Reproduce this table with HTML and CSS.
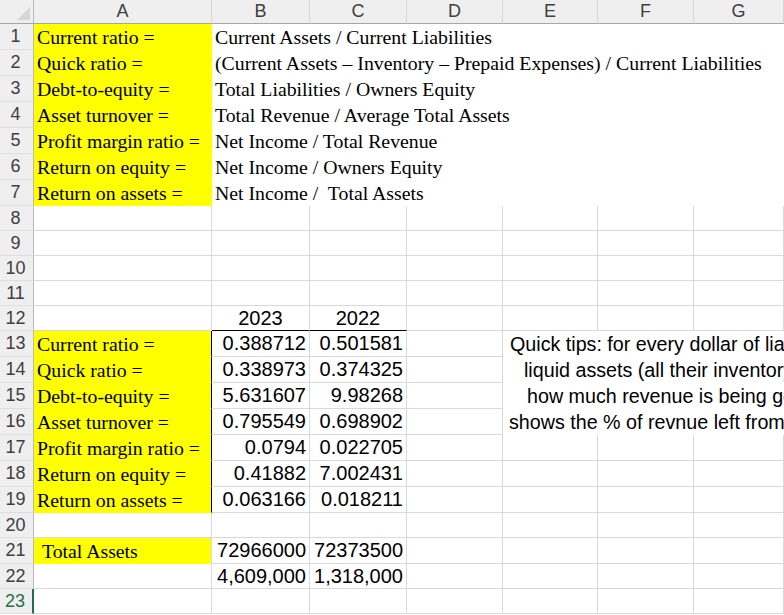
FILE: index.html
```html
<!DOCTYPE html>
<html>
<head>
<meta charset="utf-8">
<link rel="stylesheet" href="styles.css">
</head>
<body>
<div class="sheet">
  <!-- header row -->
  <div class="corner"><svg width="33" height="23" viewBox="0 0 33 23"><polygon points="30,7 30,20 17,20" fill="#d6d6d6"/></svg></div>
  <div class="ch">A</div><div class="ch">B</div><div class="ch">C</div><div class="ch">D</div><div class="ch">E</div><div class="ch">F</div><div class="ch">G</div>

  <div class="rh">1</div><div class="c y serif">Current ratio =</div><div class="c w serif wide">Current Assets / Current Liabilities</div>
  <div class="rh">2</div><div class="c y serif">Quick ratio =</div><div class="c w serif wide">(Current Assets – Inventory – Prepaid Expenses) / Current Liabilities</div>
  <div class="rh">3</div><div class="c y serif">Debt-to-equity =</div><div class="c w serif wide">Total Liabilities / Owners Equity</div>
  <div class="rh">4</div><div class="c y serif">Asset turnover =</div><div class="c w serif wide">Total Revenue / Average Total Assets</div>
  <div class="rh">5</div><div class="c y serif">Profit margin ratio =</div><div class="c w serif wide">Net Income / Total Revenue</div>
  <div class="rh">6</div><div class="c y serif">Return on equity =</div><div class="c w serif wide">Net Income / Owners Equity</div>
  <div class="rh">7</div><div class="c y serif">Return on assets =</div><div class="c w serif wide">Net Income /&nbsp; Total Assets</div>

  <div class="rh">8</div><div class="c"></div><div class="c"></div><div class="c"></div><div class="c"></div><div class="c"></div><div class="c"></div><div class="c"></div>
  <div class="rh">9</div><div class="c"></div><div class="c"></div><div class="c"></div><div class="c"></div><div class="c"></div><div class="c"></div><div class="c"></div>
  <div class="rh">10</div><div class="c"></div><div class="c"></div><div class="c"></div><div class="c"></div><div class="c"></div><div class="c"></div><div class="c"></div>
  <div class="rh">11</div><div class="c"></div><div class="c"></div><div class="c"></div><div class="c"></div><div class="c"></div><div class="c"></div><div class="c"></div>
  <div class="rh">12</div><div class="c"></div><div class="c sans ctr bb">2023</div><div class="c sans ctr bb">2022</div><div class="c"></div><div class="c"></div><div class="c"></div><div class="c"></div>

  <div class="rh">13</div><div class="c y serif bl">Current ratio =</div><div class="c sans num">0.388712</div><div class="c sans num">0.501581</div><div class="c"></div>
  <div class="tips sans">
    <div class="tl t1">Quick tips: for every dollar of liabilities, the company has this much in</div>
    <div class="tl t2">liquid assets (all their inventory and prepaid expenses removed)</div>
    <div class="tl t3">how much revenue is being generated per dollar of assets</div>
    <div class="tl t4">shows the % of revnue left from sales after all expenses</div>
  </div>
  <div class="rh">14</div><div class="c y serif bl">Quick ratio =</div><div class="c sans num">0.338973</div><div class="c sans num">0.374325</div><div class="c"></div>
  <div class="rh">15</div><div class="c y serif bl">Debt-to-equity =</div><div class="c sans num">5.631607</div><div class="c sans num">9.98268</div><div class="c"></div>
  <div class="rh">16</div><div class="c y serif bl">Asset turnover =</div><div class="c sans num">0.795549</div><div class="c sans num">0.698902</div><div class="c"></div>
  <div class="rh">17</div><div class="c y serif bl">Profit margin ratio =</div><div class="c sans num">0.0794</div><div class="c sans num">0.022705</div><div class="c"></div><div class="c"></div><div class="c"></div><div class="c"></div>
  <div class="rh">18</div><div class="c y serif bl">Return on equity =</div><div class="c sans num">0.41882</div><div class="c sans num">7.002431</div><div class="c"></div><div class="c"></div><div class="c"></div><div class="c"></div>
  <div class="rh">19</div><div class="c y serif bl">Return on assets =</div><div class="c sans num">0.063166</div><div class="c sans num">0.018211</div><div class="c"></div><div class="c"></div><div class="c"></div><div class="c"></div>

  <div class="rh">20</div><div class="c"></div><div class="c"></div><div class="c"></div><div class="c"></div><div class="c"></div><div class="c"></div><div class="c"></div>
  <div class="rh">21</div><div class="c y yg serif">&nbsp;Total Assets</div><div class="c sans num">72966000</div><div class="c sans num">72373500</div><div class="c"></div><div class="c"></div><div class="c"></div><div class="c"></div>
  <div class="rh">22</div><div class="c"></div><div class="c sans num">4,609,000</div><div class="c sans num">1,318,000</div><div class="c"></div><div class="c"></div><div class="c"></div><div class="c"></div>
  <div class="rh sel">23</div><div class="c"></div><div class="c"></div><div class="c"></div><div class="c"></div><div class="c"></div><div class="c"></div><div class="c"></div>
</div>
</body>
</html>
```
FILE: styles.css
```css
html, body {
  margin: 0;
  padding: 0;
  background: #ffffff;
  overflow: hidden;
}

.sheet {
  display: grid;
  width: 784px;
  grid-template-columns: 34px 178px 98px 97px 96px 95px 96px 1fr;
  grid-template-rows: 24px repeat(7, 26px) repeat(5, 25px) repeat(7, 26px) 25px 26px 25px 25px;
  color: #000;
}

.sheet > div {
  box-sizing: border-box;
  min-width: 0;
  overflow: hidden;
  white-space: nowrap;
}

.corner {
  background: #efefef;
  border-right: 1px solid #b8b8b8;
  border-bottom: 1px solid #a6a6a6;
}
.corner svg { display: block; }

.ch {
  background: #efefef;
  border-right: 1px solid #d6d6d6;
  border-bottom: 1px solid #a6a6a6;
  font-family: "Liberation Sans", Arial, sans-serif;
  font-size: 18px;
  line-height: 23px;
  color: #404040;
  text-align: center;
}

.rh {
  background: #efefef;
  border-right: 1px solid #b8b8b8;
  border-bottom: 1px solid #dedede;
  font-family: "Liberation Sans", Arial, sans-serif;
  font-size: 18px;
  color: #404040;
  text-align: center;
  padding-right: 2px;
  display: flex;
  align-items: center;
  justify-content: center;
}

.rh.sel {
  color: #1e7145;
  border-right: 2px solid #1e7145;
}

.c {
  border-right: 1px solid #d9d9d9;
  border-bottom: 1px solid #d9d9d9;
  line-height: 24px;
  padding: 0 3px;
}

.serif {
  font-family: "Liberation Serif", "Times New Roman", serif;
  font-size: 19.8px;
  padding-top: 1px;
}

.sans {
  font-family: "Liberation Sans", Arial, sans-serif;
  font-size: 20px;
}

.y {
  background: #ffff00;
  border-color: #ffff00;
}

.yg {
  border-right-color: #d9d9d9;
}

.w {
  background: #ffffff;
  border-color: #ffffff;
}

.wide {
  grid-column: span 6;
}

.num { text-align: right; }
.ctr { text-align: center; }
.bb { border-bottom-color: #000; }
.bl { border-right-color: #000; }

.tips {
  grid-column: span 3;
  grid-row: span 4;
  background: #ffffff;
  font-size: 19.7px;
}

.tl {
  height: 26px;
  line-height: 26px;
  white-space: nowrap;
}
.t1 { padding-left: 7px; }
.t2 { padding-left: 21px; }
.t3 { padding-left: 24px; }
.t4 { padding-left: 6px; }
```
